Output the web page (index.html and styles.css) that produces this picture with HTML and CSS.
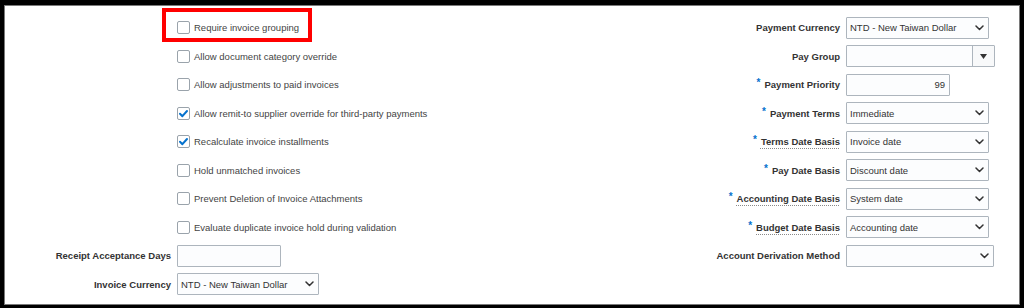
FILE: index.html
```html
<!DOCTYPE html>
<html>
<head>
<meta charset="utf-8">
<title>Invoice and Payment Options</title>
<link rel="stylesheet" href="styles.css">
</head>
<body>
<div class="panel">
  <div class="form">
    <!-- row 1 -->
    <div class="lbl"></div>
    <div class="chk-cell"><span class="highlight"></span><span class="cb"></span><span class="cb-text">Require invoice grouping</span></div>
    <div class="lbl">Payment Currency</div>
    <div class="fld"><div class="select w143"><span class="val">NTD - New Taiwan Dollar</span><svg class="chev" width="9" height="6" viewBox="0 0 9 6"><polyline points="1,1 4.5,4.5 8,1"/></svg></div></div>

    <!-- row 2 -->
    <div class="lbl"></div>
    <div class="chk-cell"><span class="cb"></span><span class="cb-text">Allow document category override</span></div>
    <div class="lbl">Pay Group</div>
    <div class="fld"><div class="combo"><span class="combo-input"></span><span class="combo-btn"><svg width="7" height="5" viewBox="0 0 7 5"><polygon points="0,0 7,0 3.5,5" class="tri"/></svg></span></div></div>

    <!-- row 3 -->
    <div class="lbl"></div>
    <div class="chk-cell"><span class="cb"></span><span class="cb-text">Allow adjustments to paid invoices</span></div>
    <div class="lbl"><span class="req">*</span>Payment Priority</div>
    <div class="fld"><div class="input w104 num">99</div></div>

    <!-- row 4 -->
    <div class="lbl"></div>
    <div class="chk-cell"><span class="cb checked"><svg width="13" height="13" viewBox="0 0 13 13"><polyline points="3,6.8 5.4,9.2 10,4" class="tick"/></svg></span><span class="cb-text">Allow remit-to supplier override for third-party payments</span></div>
    <div class="lbl"><span class="req">*</span>Payment Terms</div>
    <div class="fld"><div class="select w143"><span class="val">Immediate</span><svg class="chev" width="9" height="6" viewBox="0 0 9 6"><polyline points="1,1 4.5,4.5 8,1"/></svg></div></div>

    <!-- row 5 -->
    <div class="lbl"></div>
    <div class="chk-cell"><span class="cb checked"><svg width="13" height="13" viewBox="0 0 13 13"><polyline points="3,6.8 5.4,9.2 10,4" class="tick"/></svg></span><span class="cb-text">Recalculate invoice installments</span></div>
    <div class="lbl"><span class="req">*</span><span class="dotted">Terms Date Basis</span></div>
    <div class="fld"><div class="select w143"><span class="val">Invoice date</span><svg class="chev" width="9" height="6" viewBox="0 0 9 6"><polyline points="1,1 4.5,4.5 8,1"/></svg></div></div>

    <!-- row 6 -->
    <div class="lbl"></div>
    <div class="chk-cell"><span class="cb"></span><span class="cb-text">Hold unmatched invoices</span></div>
    <div class="lbl"><span class="req">*</span>Pay Date Basis</div>
    <div class="fld"><div class="select w143"><span class="val">Discount date</span><svg class="chev" width="9" height="6" viewBox="0 0 9 6"><polyline points="1,1 4.5,4.5 8,1"/></svg></div></div>

    <!-- row 7 -->
    <div class="lbl"></div>
    <div class="chk-cell"><span class="cb"></span><span class="cb-text">Prevent Deletion of Invoice Attachments</span></div>
    <div class="lbl"><span class="req">*</span><span class="dotted">Accounting Date Basis</span></div>
    <div class="fld"><div class="select w143"><span class="val">System date</span><svg class="chev" width="9" height="6" viewBox="0 0 9 6"><polyline points="1,1 4.5,4.5 8,1"/></svg></div></div>

    <!-- row 8 -->
    <div class="lbl"></div>
    <div class="chk-cell"><span class="cb"></span><span class="cb-text">Evaluate duplicate invoice hold during validation</span></div>
    <div class="lbl"><span class="req">*</span><span class="dotted">Budget Date Basis</span></div>
    <div class="fld"><div class="select w143"><span class="val">Accounting date</span><svg class="chev" width="9" height="6" viewBox="0 0 9 6"><polyline points="1,1 4.5,4.5 8,1"/></svg></div></div>

    <!-- row 9 -->
    <div class="lbl">Receipt Acceptance Days</div>
    <div class="fld"><div class="input w104"></div></div>
    <div class="lbl">Account Derivation Method</div>
    <div class="fld"><div class="select w148"><span class="val"></span><svg class="chev" width="9" height="6" viewBox="0 0 9 6"><polyline points="1,1 4.5,4.5 8,1"/></svg></div></div>

    <!-- row 10 -->
    <div class="lbl">Invoice Currency</div>
    <div class="fld"><div class="select w142"><span class="val">NTD - New Taiwan Dollar</span><svg class="chev" width="9" height="6" viewBox="0 0 9 6"><polyline points="1,1 4.5,4.5 8,1"/></svg></div></div>
    <div class="lbl"></div>
    <div class="fld"></div>
  </div>
</div>
</body>
</html>
```

FILE: styles.css
```css
html, body {
  margin: 0;
  padding: 0;
  background: #000;
}

body {
  width: 1024px;
  height: 308px;
  overflow: hidden;
  font-family: "Liberation Sans", Arial, sans-serif;
  font-size: 9.5px;
  color: #333;
}

.panel {
  box-sizing: border-box;
  margin: 5px 4px 0 4px;
  width: 1016px;
  height: 300px;
  background: #fff;
  border: 1px solid #7a7a7a;
  padding-top: 7.5px;
}

.form {
  display: grid;
  grid-template-columns: 166px 400px 1fr 173px;
  grid-auto-rows: 28.5px;
  column-gap: 6px;
}

.lbl {
  display: flex;
  align-items: center;
  justify-content: flex-end;
  font-weight: bold;
  color: #333;
  white-space: nowrap;
}

.req {
  color: #0572ce;
  font-weight: bold;
  font-size: 10px;
  position: relative;
  top: -2px;
  margin-right: 4px;
}

.dotted {
  text-decoration: underline dotted #8a8a8a;
  text-decoration-thickness: 1px;
  text-underline-offset: 3px;
}

.fld {
  display: flex;
  align-items: center;
}

.chk-cell {
  position: relative;
  display: flex;
  align-items: center;
  gap: 4px;
  color: #444;
  white-space: nowrap;
}

.highlight {
  position: absolute;
  left: -15px;
  top: -5.5px;
  width: 150px;
  height: 34px;
  box-sizing: border-box;
  border: 4px solid #f00;
}

.cb {
  box-sizing: border-box;
  width: 13px;
  height: 13px;
  border: 1px solid #9aa3ab;
  border-radius: 2px;
  background: #fff;
  position: relative;
  flex: none;
}

.cb svg {
  position: absolute;
  left: -1px;
  top: -1px;
}

.tick {
  fill: none;
  stroke: #0572ce;
  stroke-width: 2;
  stroke-linecap: round;
  stroke-linejoin: round;
}

.select,
.input,
.combo {
  box-sizing: border-box;
  height: 22px;
  border: 1px solid #adb5bd;
  background: #fcfdfe;
  color: #333;
  border-radius: 1px;
}

.select {
  display: flex;
  align-items: center;
  justify-content: space-between;
  padding: 0 4px 0 3px;
}

.chev polyline {
  fill: none;
  stroke: #333;
  stroke-width: 1.5;
  stroke-linecap: round;
  stroke-linejoin: round;
}

.w142 { width: 142px; }
.w143 { width: 143px; }
.w148 { width: 148px; }
.w104 { width: 104px; }

.input {
  display: flex;
  align-items: center;
  padding: 0 4px;
}

.input.num {
  justify-content: flex-end;
}

.combo {
  display: flex;
  width: 149px;
}

.combo-input {
  flex: 1;
}

.combo-btn {
  width: 21px;
  border-left: 1px solid #adb5bd;
  background: #f8f9fa;
  display: flex;
  align-items: center;
  justify-content: center;
}

.tri {
  fill: #333;
}
```
